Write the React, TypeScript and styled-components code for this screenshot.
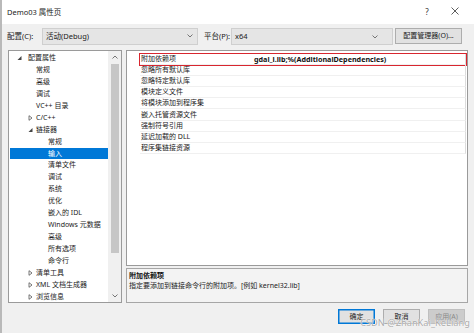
import React from "react";
import styled, { createGlobalStyle } from "styled-components";

const Global = createGlobalStyle`
  html, body { margin: 0; padding: 0; background: #f0f0f0; }
  body { font-family: "Noto Sans", "Noto Sans CJK SC", sans-serif; }
  * { box-sizing: border-box; }
`;

const FONT = `"Noto Sans", "Noto Sans CJK SC", sans-serif`;

const Window = styled.div`
  position: relative;
  width: 474px;
  height: 333px;
  background: #f0f0f0;
  box-shadow: inset 2px 0 0 #b9b9b9;
  display: flex;
  flex-direction: column;
  font-family: ${FONT};
  font-size: 7px;
  color: #1b1b1b;
  overflow: hidden;
`;

const TitleBar = styled.div`
  height: 24px;
  background: #ffffff;
  display: flex;
  align-items: center;
  padding: 0 12px 0 7px;
  margin-left: 2px;
`;

const Title = styled.div`
  font-size: 7.5px;
  line-height: 10px;
  color: #222;
  flex: 1;
  margin-left: -2px;
`;

const TitleButton = styled.div<{ $w: number }>`
  width: ${(p) => p.$w}px;
  text-align: center;
  font-size: 8px;
  line-height: 10px;
  color: #333;
`;

const ConfigRow = styled.div`
  height: 22px;
  display: flex;
  align-items: center;
  padding-left: 7px;
  margin-top: 1px;
`;

const Label = styled.div<{ $w: number }>`
  width: ${(p) => p.$w}px;
  font-size: 7.5px;
  line-height: 10px;
  color: #222;
`;

const Combo = styled.div<{ $w: number }>`
  width: ${(p) => p.$w}px;
  height: 17px;
  background: #e5e5e5;
  border: 1px solid #cfcfcf;
  display: flex;
  align-items: center;
  padding: 0 4px 0 3px;
  font-size: 7.5px;
  line-height: 10px;
  color: #222;
`;

const ComboText = styled.div`
  flex: 1;
`;

const Button = styled.div<{ $w: number; $primary?: boolean; $disabled?: boolean }>`
  width: ${(p) => p.$w}px;
  height: ${(p) => (p.$primary !== undefined ? 15 : 16)}px;
  background: ${(p) => (p.$disabled ? "#cccccc" : "#e1e1e1")};
  border: 1px solid ${(p) => (p.$primary ? "#0078d7" : p.$disabled ? "#bfbfbf" : "#adadad")};
  box-shadow: ${(p) => (p.$primary ? "inset 0 0 0 0.5px #0078d7" : "none")};
  display: flex;
  align-items: center;
  justify-content: center;
  font-size: 7px;
  line-height: 10px;
  color: ${(p) => (p.$disabled ? "#8a8a8a" : "#222")};
`;

const Main = styled.div`
  display: flex;
  gap: 4px;
  margin-top: 3px;
  padding-left: 8px;
  height: 253px;
`;

const TreePanel = styled.div`
  width: 114px;
  height: 100%;
  background: #ffffff;
  border: 1px solid #9a9a9a;
  display: flex;
`;

const TreeList = styled.div`
  flex: 1;
  padding: 1px 0 0 1px;
  overflow: hidden;
`;

const TreeRow = styled.div<{ $indent: number; $selected?: boolean }>`
  position: relative;
  height: 11.95px;
  line-height: 12px;
  padding-left: ${(p) => p.$indent}px;
  background: ${(p) => (p.$selected ? "#0078d7" : "transparent")};
  color: ${(p) => (p.$selected ? "#ffffff" : "#1b1b1b")};
  white-space: nowrap;
`;

const Toggle = styled.svg<{ $left: number }>`
  position: absolute;
  left: ${(p) => p.$left}px;
  top: 3px;
`;

const ScrollBar = styled.div`
  width: 13px;
  background: #f0f0f0;
  display: flex;
  flex-direction: column;
  align-items: center;
`;

const ScrollArrow = styled.div`
  height: 12px;
  width: 100%;
  display: flex;
  align-items: center;
  justify-content: center;
`;

const ScrollThumb = styled.div`
  width: 8px;
  height: 189px;
  background: #c6c6c6;
  margin-top: 1px;
`;

const RightCol = styled.div`
  width: 342px;
  display: flex;
  flex-direction: column;
  gap: 2px;
`;

const GridPanel = styled.div`
  height: 216px;
  background: #ffffff;
  border: 1px solid #9a9a9a;
  padding: 3px 1px 0 13px;
`;

const GridRow = styled.div<{ $marked?: boolean }>`
  position: relative;
  height: 11.1px;
  display: flex;
  align-items: center;
  border-bottom: 1px solid #f0f0f0;
  border-right: 1px solid #dcdcdc;
  outline: ${(p) => (p.$marked ? "1px solid #d8262f" : "none")};
  outline-offset: 0px;
`;

const GridName = styled.div`
  width: 114px;
  padding-left: 1px;
  line-height: 10px;
  color: #222;
  white-space: nowrap;
`;

const GridValue = styled.div`
  font-weight: 700;
  font-size: 7.2px;
  line-height: 10px;
  color: #111;
  white-space: nowrap;
`;

const DescPanel = styled.div`
  height: 35px;
  background: #f3f3f3;
  border: 1px solid #a6a6a6;
  padding: 2px 0 0 2px;
`;

const DescTitle = styled.div`
  font-weight: 700;
  line-height: 10px;
  color: #111;
`;

const DescText = styled.div`
  line-height: 10px;
  color: #222;
`;

const Footer = styled.div`
  display: flex;
  justify-content: flex-end;
  gap: 8px;
  padding: 6px 9px 0 0;
`;

const Watermark = styled.div`
  position: absolute;
  right: 4px;
  bottom: 5px;
  font-family: "Noto Sans", sans-serif;
  font-size: 9.2px;
  line-height: 11px;
  color: rgba(140, 140, 140, 0.75);
  text-shadow: 0 0 1px #fff, 0 0 1px #fff;
  letter-spacing: 0.05px;
`;

type TreeItem = { text: string; level: 0 | 1 | 2; toggle?: "open" | "closed"; selected?: boolean };

const treeItems: TreeItem[] = [
  { text: "配置属性", level: 0, toggle: "open" },
  { text: "常规", level: 1 },
  { text: "高级", level: 1 },
  { text: "调试", level: 1 },
  { text: "VC++ 目录", level: 1 },
  { text: "C/C++", level: 1, toggle: "closed" },
  { text: "链接器", level: 1, toggle: "open" },
  { text: "常规", level: 2 },
  { text: "输入", level: 2, selected: true },
  { text: "清单文件", level: 2 },
  { text: "调试", level: 2 },
  { text: "系统", level: 2 },
  { text: "优化", level: 2 },
  { text: "嵌入的 IDL", level: 2 },
  { text: "Windows 元数据", level: 2 },
  { text: "高级", level: 2 },
  { text: "所有选项", level: 2 },
  { text: "命令行", level: 2 },
  { text: "清单工具", level: 1, toggle: "closed" },
  { text: "XML 文档生成器", level: 1, toggle: "closed" },
  { text: "浏览信息", level: 1, toggle: "closed" },
];

const indents = [18, 26, 38];
const toggleLeft = [7, 18, 28];

const gridRows: { name: string; value?: string }[] = [
  { name: "附加依赖项", value: "gdal_i.lib;%(AdditionalDependencies)" },
  { name: "忽略所有默认库" },
  { name: "忽略特定默认库" },
  { name: "模块定义文件" },
  { name: "将模块添加到程序集" },
  { name: "嵌入托管资源文件" },
  { name: "强制符号引用" },
  { name: "延迟加载的 DLL" },
  { name: "程序集链接资源" },
];

const Chevron = ({ up }: { up?: boolean }) => (
  <svg width="6" height="4" viewBox="0 0 6 4">
    <path
      d={up ? "M0.5 3.5 L3 1 L5.5 3.5" : "M0.5 0.5 L3 3 L5.5 0.5"}
      fill="none"
      stroke="#666"
      strokeWidth="0.9"
    />
  </svg>
);

const ToggleIcon = ({ kind, left, selected }: { kind: "open" | "closed"; left: number; selected?: boolean }) =>
  kind === "open" ? (
    <Toggle $left={left} width="5" height="6" viewBox="0 0 5 6">
      <path d="M4.5 1 L4.5 5 L0.5 5 Z" fill={selected ? "#fff" : "#444"} />
    </Toggle>
  ) : (
    <Toggle $left={left} width="5" height="6" viewBox="0 0 5 6">
      <path d="M1 0.7 L4 3 L1 5.3 Z" fill="none" stroke="#555" strokeWidth="0.8" />
    </Toggle>
  );

export default function App() {
  return (
    <>
      <Global />
      <Window>
        <TitleBar>
          <Title>Demo03 属性页</Title>
          <TitleButton $w={14}>?</TitleButton>
          <TitleButton $w={14} style={{ marginLeft: 14 }}>
            <svg width="8" height="8" viewBox="0 0 8 8">
              <path d="M0.5 0.5 L7.5 7.5 M7.5 0.5 L0.5 7.5" stroke="#333" strokeWidth="0.8" />
            </svg>
          </TitleButton>
        </TitleBar>

        <ConfigRow>
          <Label $w={35}>配置(C):</Label>
          <Combo $w={156}>
            <ComboText>活动(Debug)</ComboText>
            <Chevron />
          </Combo>
          <Label $w={33} style={{ paddingLeft: 6 }}>平台(P):</Label>
          <Combo $w={162}>
            <ComboText>x64</ComboText>
            <span style={{ marginRight: 10 }}>
              <Chevron />
            </span>
          </Combo>
          <Button $w={67} style={{ marginLeft: 2 }}>配置管理器(O)...</Button>
        </ConfigRow>

        <Main>
          <TreePanel>
            <TreeList>
              {treeItems.map((it, i) => (
                <TreeRow key={i} $indent={indents[it.level]} $selected={it.selected}>
                  {it.toggle && (
                    <ToggleIcon kind={it.toggle} left={toggleLeft[it.level]} selected={it.selected} />
                  )}
                  {it.text}
                </TreeRow>
              ))}
            </TreeList>
            <ScrollBar>
              <ScrollArrow>
                <Chevron up />
              </ScrollArrow>
              <ScrollThumb />
              <div style={{ flex: 1 }} />
              <ScrollArrow>
                <Chevron />
              </ScrollArrow>
            </ScrollBar>
          </TreePanel>

          <RightCol>
            <GridPanel>
              {gridRows.map((r, i) => (
                <GridRow key={i} $marked={i === 0}>
                  <GridName>{r.name}</GridName>
                  {r.value && <GridValue>{r.value}</GridValue>}
                </GridRow>
              ))}
            </GridPanel>
            <DescPanel>
              <DescTitle>附加依赖项</DescTitle>
              <DescText>指定要添加到链接命令行的附加项。[例如 kernel32.lib]</DescText>
            </DescPanel>
          </RightCol>
        </Main>

        <Footer>
          <Button $w={37} $primary>确定</Button>
          <Button $w={37} $primary={false}>取消</Button>
          <Button $w={37} $primary={false} $disabled>应用(A)</Button>
        </Footer>

        <Watermark>CSDN @ZhanKai_KeLiang</Watermark>
      </Window>
    </>
  );
}
